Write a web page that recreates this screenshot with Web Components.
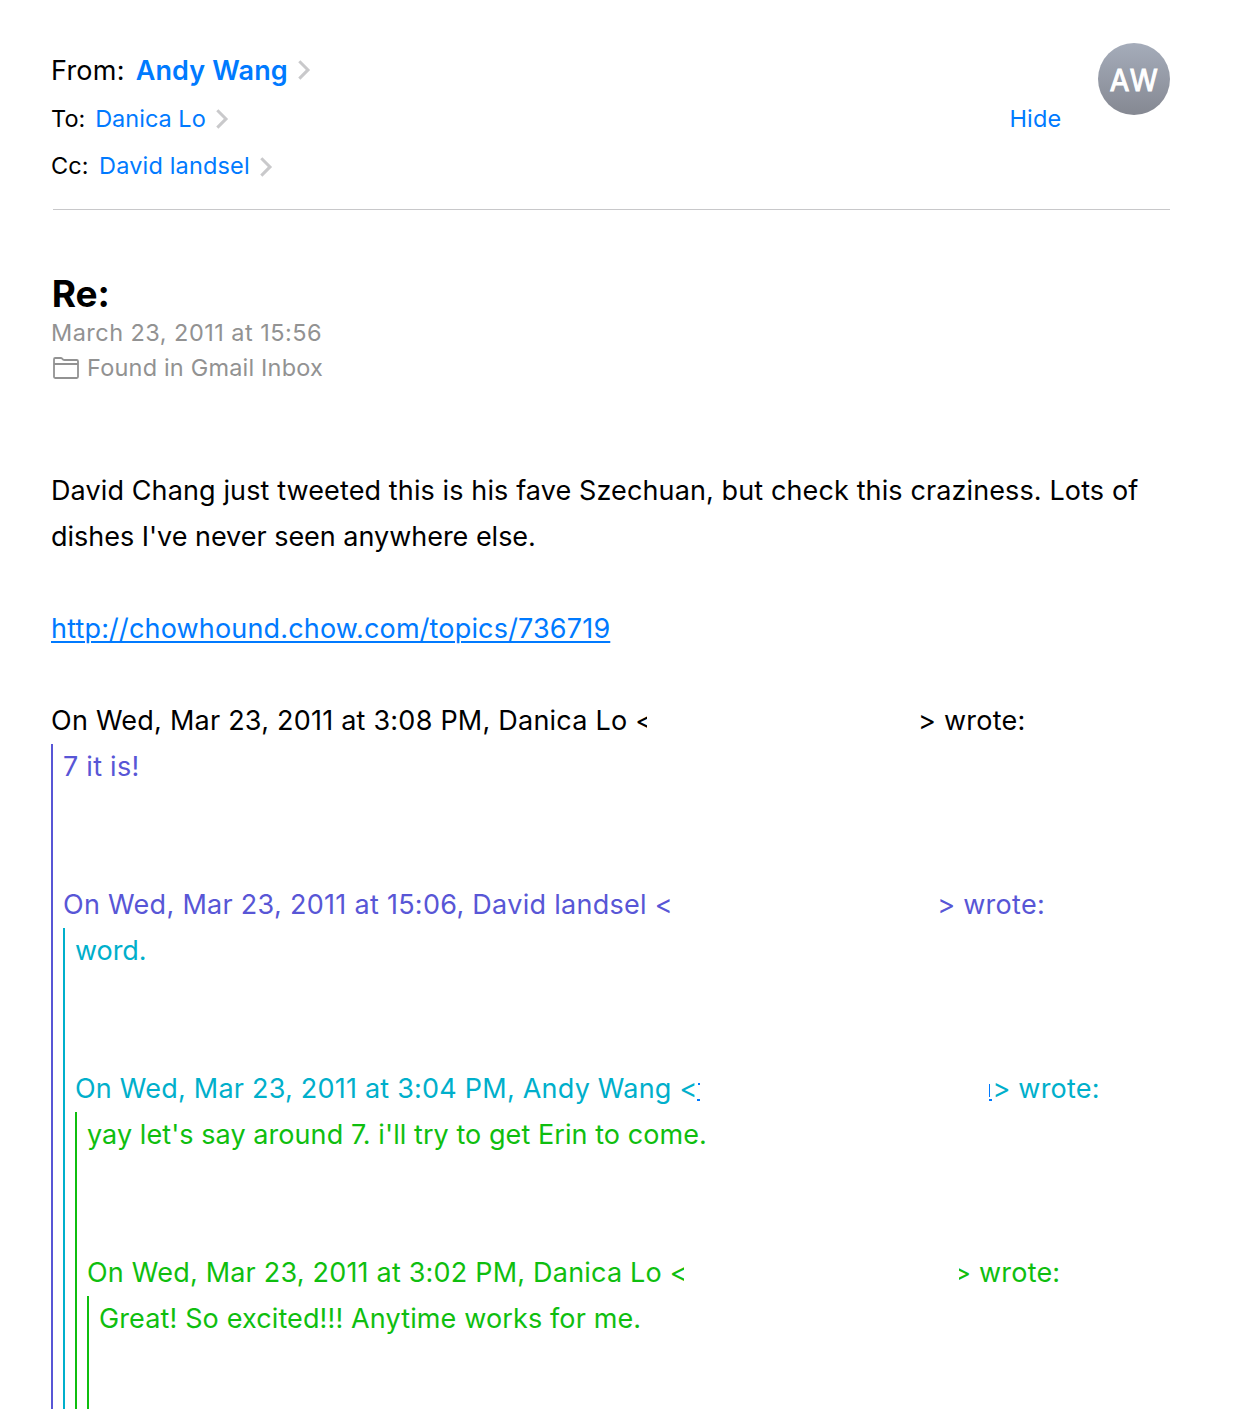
<!DOCTYPE html>
<html lang="en">
<head>
<meta charset="utf-8">
<title>Re:</title>
<style>
  body {
    margin: 0;
    height: 1409px;
    overflow: hidden;
    background: #fff;
    color: #000;
    font-family: Inter, "Liberation Sans", sans-serif;
  }
</style>
</head>
<body>

<template id="mail-message-template">
  <style>
    :host {
      display: block;
      box-sizing: border-box;
      width: 1254px;
      padding: 43px 84px 0 51px;
    }
    .body {
      padding-top: 83px;
    }
  </style>
  <slot name="header"></slot>
  <slot name="subject"></slot>
  <div class="body"><slot></slot></div>
</template>

<template id="mail-header-template">
  <style>
    :host {
      display: grid;
      grid-template-columns: 1fr auto 72px;
      grid-template-rows: 51px 49px 47px;
      height: 167px;
      background: linear-gradient(#c8c8ca, #c8c8ca) 2px 100% / 100% 1px no-repeat;
      align-items: center;
    }
    .from { grid-area: 1 / 1; padding-top: 5px; }
    .to { grid-area: 2 / 1; }
    .cc { grid-area: 3 / 1; padding-bottom: 2px; }
    .action {
      grid-area: 2 / 2;
      margin-right: 36.5px;
      color: #007aff;
      font-size: 23.5px;
      letter-spacing: 0.2px;
    }
    .avatar { grid-area: 1 / 3 / 4 / 4; align-self: start; }
  </style>
  <div class="from"><slot name="from"></slot></div>
  <div class="to"><slot name="to"></slot></div>
  <div class="cc"><slot name="cc"></slot></div>
  <div class="action"><slot name="action"></slot></div>
  <div class="avatar"><slot name="avatar"></slot></div>
</template>

<template id="address-row-template">
  <style>
    :host {
      display: flex;
      align-items: center;
      font-size: 23.5px;
      line-height: 30px;
      white-space: nowrap;
    }
    .label {
      letter-spacing: 0.05px;
      margin-right: 9.8px;
    }
    .name {
      color: #007aff;
      letter-spacing: var(--name-spacing, 0);
      margin-right: 9.8px;
    }
    :host([primary]) { font-size: 27px; }
    :host([primary]) .label { letter-spacing: 0.25px; margin-right: 10.9px; }
    :host([primary]) .name { font-weight: 600; letter-spacing: 0.15px; margin-right: 9.7px; }
    svg { display: block; margin-top: 1px; }
    :host([primary]) svg { margin-top: -2px; }
    :host([slot="cc"]) .label { margin-right: 10.6px; }
    :host([slot="cc"]) svg { margin-top: 2px; }
  </style>
  <span class="label"></span>
  <span class="name"><slot></slot></span>
  <svg width="13" height="20" viewBox="0 0 13 20" fill="none" stroke="#c9c9cb" stroke-width="3">
    <path d="M1.3 1.2 10 9.9 1.3 18.6"/>
  </svg>
</template>

<template id="contact-avatar-template">
  <style>
    :host {
      display: flex;
      align-items: center;
      justify-content: center;
      width: 72px;
      height: 72px;
      border-radius: 50%;
      background: linear-gradient(#a5acba, #858892);
      color: #fff;
      font-size: 29px;
      font-weight: 400;
      letter-spacing: 2px;
    }
    span {
      transform: translate(0.3px, 1px) scale(0.98, 1.03);
      -webkit-text-stroke: 1px #fff;
      stroke-linejoin: round;
    }
  </style>
  <span><slot></slot></span>
</template>

<template id="subject-block-template">
  <style>
    :host {
      display: block;
      padding-top: 60px;
      color: #929292;
      font-size: 23.5px;
    }
    h1 {
      margin: 1px 0 -1px;
      color: #000;
      font-size: 37px;
      font-weight: 700;
      line-height: 46px;
      padding-left: 0.7px;
    }
    .date { line-height: 34px; letter-spacing: 0.46px; }
    .mailbox {
      display: flex;
      align-items: center;
      line-height: 35px;
      letter-spacing: 0.18px;
    }
    svg { margin: 1px 7.1px 0 1px; }
  </style>
  <h1><slot name="title"></slot></h1>
  <div class="date"><slot name="date"></slot></div>
  <div class="mailbox">
    <svg width="28" height="24" viewBox="0 0 28 24" fill="none" stroke="#929292" stroke-width="1.8" stroke-linejoin="round">
      <path d="M2 21V3.2Q2 2 3.2 2H8.6Q9.6 2 10.2 2.7L11 3.5Q11.6 4 12.6 4H24.8Q26 4 26 5.2V20.8Q26 22 24.8 22H3.2Q2 22 2 20.8ZM2 8H26"/>
    </svg>
    <slot></slot>
  </div>
</template>

<template id="mail-line-template">
  <style>
    :host {
      display: block;
      height: 46px;
      line-height: 46px;
      font-size: 27px;
      white-space: nowrap;
    }
    ::slotted(a) {
      color: #007aff;
      text-decoration: underline;
      text-decoration-thickness: 2px;
      text-underline-offset: 3px;
    }
  </style>
  <slot></slot>
</template>

<template id="mail-quote-template">
  <style>
    :host {
      display: block;
      padding-left: 10px;
      border-left: 2px solid currentColor;
    }
    :host([level="1"]) { color: #5856d6; }
    :host([level="2"]) { color: #00afcb; }
    :host([level="3"]), :host([level="4"]) { color: #0fbe0f; }
    :host([level="4"]) { min-height: 140px; }
  </style>
  <slot></slot>
</template>

<!-- Blanked-out address; it may overlap the brackets on both sides. -->
<template id="hidden-address-template">
  <style>
    :host {
      display: inline-block;
      position: relative;
      height: 30px;
      background: #fff;
      vertical-align: middle;
    }
    i {
      display: none;
      position: absolute;
      background: #007aff;
    }
    :host([linked]) i { display: block; }
    .dot { left: 1px; top: 7px; width: 2px; height: 2px; }
    .start { left: 0; top: 23px; width: 3px; height: 2px; }
    .stem { right: 2px; top: 8px; width: 1px; height: 13px; }
    .end { right: 0; top: 23px; width: 3px; height: 2px; }
  </style>
  <i class="dot"></i><i class="start"></i><i class="stem"></i><i class="end"></i>
</template>

<script>
  function template(id) {
    return document.getElementById(id + "-template").content.cloneNode(true);
  }

  class MailElement extends HTMLElement {
    constructor() {
      super();
      this.attachShadow({ mode: "open" });
      this.shadowRoot.appendChild(template(this.localName));
    }
  }

  ["mail-message", "mail-header", "contact-avatar", "subject-block", "mail-quote"].forEach(
    (name) => customElements.define(name, class extends MailElement {})
  );

  customElements.define(
    "address-row",
    class extends MailElement {
      connectedCallback() {
        this.shadowRoot.querySelector(".label").textContent = this.getAttribute("label");
      }
    }
  );

  customElements.define(
    "mail-line",
    class extends MailElement {
      connectedCallback() {
        this.style.letterSpacing = (this.getAttribute("spacing") || 0) + "px";
      }
    }
  );

  customElements.define(
    "hidden-address",
    class extends MailElement {
      connectedCallback() {
        const before = Number(this.getAttribute("before") || 0);
        const after = Number(this.getAttribute("after") || 0);
        this.style.width = Number(this.getAttribute("width")) + after + "px";
        this.style.marginLeft = -before + "px";
        this.style.marginRight = -after + "px";
      }
    }
  );
</script>

<mail-message>
  <mail-header slot="header">
    <address-row slot="from" label="From:" primary>Andy Wang</address-row>
    <address-row slot="to" label="To:">Danica Lo</address-row>
    <address-row slot="cc" label="Cc:" style="--name-spacing: 0.15px">David landsel</address-row>
    <span slot="action">Hide</span>
    <contact-avatar slot="avatar">AW</contact-avatar>
  </mail-header>

  <subject-block slot="subject">
    <span slot="title">Re:</span>
    <span slot="date">March 23, 2011 at 15:56</span>
    Found in Gmail Inbox
  </subject-block>

  <mail-line spacing="0.115">David Chang just tweeted this is his fave Szechuan, but check this craziness. Lots of</mail-line>
  <mail-line spacing="-0.02">dishes I've never seen anywhere else.</mail-line>
  <mail-line></mail-line>
  <mail-line spacing="0.167"><a>http://chowhound.chow.com/topics/736719</a></mail-line>
  <mail-line></mail-line>
  <mail-line spacing="0.23">On Wed, Mar 23, 2011 at 3:08 PM, Danica Lo &lt;<hidden-address before="6.8" width="271.5"></hidden-address>&gt; wrote:</mail-line>
  <mail-quote level="1">
    <mail-line spacing="0.25">7 it is!</mail-line>
    <mail-line></mail-line>
    <mail-line></mail-line>
    <mail-line spacing="0.29">On Wed, Mar 23, 2011 at 15:06, David landsel &lt;<hidden-address width="264.2"></hidden-address>&gt; wrote:</mail-line>
    <mail-quote level="2">
      <mail-line spacing="-0.05">word.</mail-line>
      <mail-line></mail-line>
      <mail-line></mail-line>
      <mail-line spacing="0.22">On Wed, Mar 23, 2011 at 3:04 PM, Andy Wang &lt;<hidden-address linked before="0.5" width="295.4"></hidden-address>&gt; wrote:</mail-line>
      <mail-quote level="3">
        <mail-line spacing="0.065">yay let's say around 7. i'll try to get Erin to come.</mail-line>
        <mail-line></mail-line>
        <mail-line></mail-line>
        <mail-line spacing="0.2">On Wed, Mar 23, 2011 at 3:02 PM, Danica Lo &lt;<hidden-address before="4" width="269.4" after="6"></hidden-address>&gt; wrote:</mail-line>
        <mail-quote level="4">
          <mail-line spacing="0.13">Great! So excited!!! Anytime works for me.</mail-line>
        </mail-quote>
      </mail-quote>
    </mail-quote>
  </mail-quote>
</mail-message>

</body>
</html>
